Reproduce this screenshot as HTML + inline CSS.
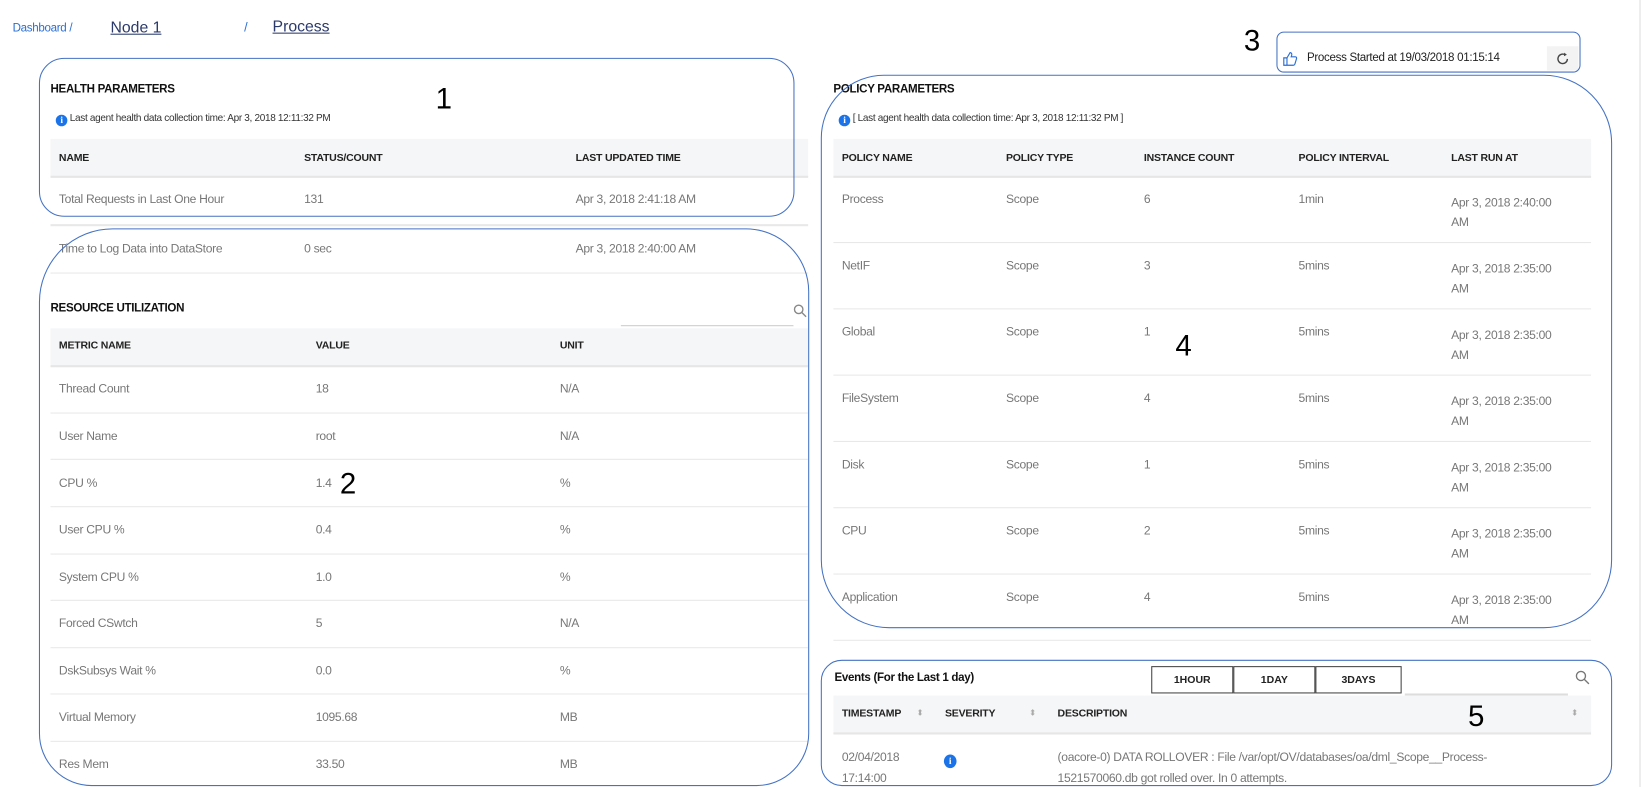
<!DOCTYPE html>
<html><head><meta charset="utf-8"><style>
html,body{margin:0;padding:0;background:#fff;width:1650px;height:787px;overflow:hidden}
#w{position:absolute;left:0;top:0;width:1568px;height:748px;overflow:hidden;transform:scale(1.0523);transform-origin:0 0;font-family:"Liberation Sans Narrow","Liberation Sans",sans-serif;color:#777}
.a{position:absolute;white-space:nowrap}
.t{font-size:11.5px;color:#777;letter-spacing:-0.3px}
.h{font-size:10px;font-weight:bold;color:#222;letter-spacing:-0.2px}
.ti{font-size:11px;font-weight:bold;color:#111;letter-spacing:-0.3px}
.hb{position:absolute;background:#f5f6f7;border-bottom:2px solid #e6e6e6}
.ln{position:absolute;height:1px;background:#e8e8e8}
.bx{position:absolute;border:1.6px solid #4472c4}
.n{position:absolute;font-family:"Liberation Sans",sans-serif;font-size:28px;color:#000}
.ic{display:inline-block;width:11px;height:11px;border-radius:50%;background:#1a73e8;color:#fff;font-size:9px;font-weight:bold;text-align:center;line-height:11px;font-family:"Liberation Serif",serif;vertical-align:-2px}
.btn{position:absolute;top:633px;height:26px;width:78px;border:1.5px solid #444;font-size:10px;font-weight:bold;color:#222;text-align:center;line-height:26px;box-sizing:border-box}
</style></head><body><div id="w">
<div class="a" style="left:12px;top:21px;font-size:11px;color:#2a6fd6;letter-spacing:-0.3px">Dashboard /</div>
<div class="a" style="left:105px;top:18px;font-size:15px;color:#2b3a6b;text-decoration:underline">Node 1</div>
<div class="a" style="left:232px;top:19px;font-size:12px;color:#2a6fd6">/</div>
<div class="a" style="left:259px;top:17px;font-size:15px;color:#2b3a6b;text-decoration:underline">Process</div>

<div class="a ti" style="left:48px;top:79px">HEALTH PARAMETERS</div>
<div class="a" style="left:53px;top:107px;font-size:9.5px;color:#333;letter-spacing:-0.3px"><span class="ic">i</span> Last agent health data collection time: Apr 3, 2018 12:11:32 PM</div>
<div class="hb" style="left:48px;top:132px;width:720px;height:35px"></div>
<div class="a h" style="left:56px;top:145px">NAME</div>
<div class="a h" style="left:289px;top:145px">STATUS/COUNT</div>
<div class="a h" style="left:547px;top:145px">LAST UPDATED TIME</div>
<div class="a t" style="left:56px;top:184px">Total Requests in Last One Hour</div>
<div class="a t" style="left:289px;top:184px">131</div>
<div class="a t" style="left:547px;top:184px">Apr 3, 2018 2:41:18 AM</div>
<div class="ln" style="left:48px;top:213px;width:720px;height:2px"></div>
<div class="a t" style="left:56px;top:231px">Time to Log Data into DataStore</div>
<div class="a t" style="left:289px;top:231px">0 sec</div>
<div class="a t" style="left:547px;top:231px">Apr 3, 2018 2:40:00 AM</div>
<div class="ln" style="left:48px;top:259px;width:720px"></div>

<div class="a ti" style="left:48px;top:287px">RESOURCE UTILIZATION</div>
<div class="ln" style="left:590px;top:309px;width:164px;background:#ccc"></div>
<svg class="a" style="left:754px;top:289px" width="13" height="13" viewBox="0 0 13 13"><circle cx="5" cy="5" r="4" fill="none" stroke="#888" stroke-width="1.3"/><path d="M8 8l4 4" stroke="#888" stroke-width="1.3"/></svg>
<div class="hb" style="left:48px;top:312px;width:720px;height:35px"></div>
<div class="a h" style="left:56px;top:323px">METRIC NAME</div>
<div class="a h" style="left:300px;top:323px">VALUE</div>
<div class="a h" style="left:532px;top:323px">UNIT</div>
<div class="a t" style="left:56px;top:364px">Thread Count</div><div class="a t" style="left:300px;top:364px">18</div><div class="a t" style="left:532px;top:364px">N/A</div>
<div class="ln" style="left:48px;top:392px;width:720px"></div>
<div class="a t" style="left:56px;top:409px">User Name</div><div class="a t" style="left:300px;top:409px">root</div><div class="a t" style="left:532px;top:409px">N/A</div>
<div class="ln" style="left:48px;top:436px;width:720px"></div>
<div class="a t" style="left:56px;top:454px">CPU %</div><div class="a t" style="left:300px;top:454px">1.4</div><div class="a t" style="left:532px;top:454px">%</div>
<div class="ln" style="left:48px;top:481px;width:720px"></div>
<div class="a t" style="left:56px;top:498px">User CPU %</div><div class="a t" style="left:300px;top:498px">0.4</div><div class="a t" style="left:532px;top:498px">%</div>
<div class="ln" style="left:48px;top:526px;width:720px"></div>
<div class="a t" style="left:56px;top:543px">System CPU %</div><div class="a t" style="left:300px;top:543px">1.0</div><div class="a t" style="left:532px;top:543px">%</div>
<div class="ln" style="left:48px;top:570px;width:720px"></div>
<div class="a t" style="left:56px;top:587px">Forced CSwtch</div><div class="a t" style="left:300px;top:587px">5</div><div class="a t" style="left:532px;top:587px">N/A</div>
<div class="ln" style="left:48px;top:615px;width:720px"></div>
<div class="a t" style="left:56px;top:632px">DskSubsys Wait %</div><div class="a t" style="left:300px;top:632px">0.0</div><div class="a t" style="left:532px;top:632px">%</div>
<div class="ln" style="left:48px;top:659px;width:720px"></div>
<div class="a t" style="left:56px;top:676px">Virtual Memory</div><div class="a t" style="left:300px;top:676px">1095.68</div><div class="a t" style="left:532px;top:676px">MB</div>
<div class="ln" style="left:48px;top:704px;width:720px"></div>
<div class="a t" style="left:56px;top:721px">Res Mem</div><div class="a t" style="left:300px;top:721px">33.50</div><div class="a t" style="left:532px;top:721px">MB</div>

<svg class="a" style="left:1219px;top:49px" width="14" height="14" viewBox="0 0 14 14"><path d="M1 6h3v7H1zM4 6l3-5c1 0 2 1 1.5 2.5L8 5h4c1 0 1.5 1 1 2l-1.5 5c-.3.7-.8 1-1.5 1H4" fill="none" stroke="#2a6fd6" stroke-width="1.1"/></svg>
<div class="a" style="left:1242px;top:49px;font-size:11px;color:#222;letter-spacing:-0.3px">Process Started at 19/03/2018 01:15:14</div>
<div class="a" style="left:1470px;top:44px;width:30px;height:23px;background:#f3f3f3"></div>
<svg class="a" style="left:1478px;top:49px" width="14" height="14" viewBox="0 0 14 14"><path d="M11.5 7A4.5 4.5 0 1 1 9.5 3.2" fill="none" stroke="#444" stroke-width="1.3"/><path d="M8.5 1l2.5 2-2.8 1.5z" fill="#444"/></svg>

<div class="a ti" style="left:792px;top:79px">POLICY PARAMETERS</div>
<div class="a" style="left:797px;top:107px;font-size:9.5px;color:#333;letter-spacing:-0.3px"><span class="ic">i</span> [ Last agent health data collection time: Apr 3, 2018 12:11:32 PM ]</div>
<div class="hb" style="left:792px;top:132px;width:720px;height:35px"></div>
<div class="a h" style="left:800px;top:145px">POLICY NAME</div>
<div class="a h" style="left:956px;top:145px">POLICY TYPE</div>
<div class="a h" style="left:1087px;top:145px">INSTANCE COUNT</div>
<div class="a h" style="left:1234px;top:145px">POLICY INTERVAL</div>
<div class="a h" style="left:1379px;top:145px">LAST RUN AT</div>
<div id="pol"></div>

<div class="a" style="left:793px;top:638px;font-size:11px;font-weight:bold;color:#111;letter-spacing:-0.3px">Events (For the Last 1 day)</div>
<div class="btn" style="left:1094px">1HOUR</div>
<div class="btn" style="left:1172px">1DAY</div>
<div class="btn" style="left:1250px;width:82px">3DAYS</div>
<div class="ln" style="left:1335px;top:659px;width:155px;height:2px;background:#ddd"></div>
<svg class="a" style="left:1497px;top:637px" width="14" height="14" viewBox="0 0 13 13"><circle cx="5" cy="5" r="4" fill="none" stroke="#777" stroke-width="1.2"/><path d="M8 8l4 4" stroke="#777" stroke-width="1.2"/></svg>
<div class="hb" style="left:792px;top:661px;width:720px;height:35px"></div>
<div class="a h" style="left:800px;top:673px">TIMESTAMP</div><div class="a" style="left:871px;top:673px;font-size:8px;color:#aaa">⬍</div>
<div class="a h" style="left:898px;top:673px">SEVERITY</div><div class="a" style="left:978px;top:673px;font-size:8px;color:#aaa">⬍</div>
<div class="a h" style="left:1005px;top:673px">DESCRIPTION</div><div class="a" style="left:1493px;top:673px;font-size:8px;color:#aaa">⬍</div>
<div class="a t" style="left:800px;top:710px;line-height:20px">02/04/2018<br>17:14:00</div>
<div class="a" style="left:897px;top:711px"><span class="ic" style="width:12px;height:13px;line-height:13px">i</span></div>
<div class="a t" style="left:1005px;top:710px;line-height:20px">(oacore-0) DATA ROLLOVER : File /var/opt/OV/databases/oa/dml_Scope__Process-<br>1521570060.db got rolled over. In 0 attempts.</div>

<div class="a" style="left:1558px;top:0;width:1px;height:748px;background:#ddd"></div>

<div class="bx" style="left:37px;top:55px;width:716px;height:149px;border-radius:24px"></div>
<div class="bx" style="left:37px;top:217px;width:730px;height:528px;border-radius:70px 60px 50px 50px"></div>
<div class="bx" style="left:1213px;top:30px;width:287px;height:37px;border-radius:7px"></div>
<div class="bx" style="left:780px;top:71px;width:750px;height:524px;border-radius:60px 65px 65px 65px"></div>
<div class="bx" style="left:780px;top:627px;width:750px;height:118px;border-radius:20px"></div>
<div class="n" style="left:414px;top:78px">1</div>
<div class="n" style="left:323px;top:444px">2</div>
<div class="n" style="left:1182px;top:23px">3</div>
<div class="n" style="left:1117px;top:313px">4</div>
<div class="n" style="left:1395px;top:665px">5</div>
</div>
<script>
var r=[["Process","6","1min","2:40:00"],["NetIF","3","5mins","2:35:00"],["Global","1","5mins","2:35:00"],["FileSystem","4","5mins","2:35:00"],["Disk","1","5mins","2:35:00"],["CPU","2","5mins","2:35:00"],["Application","4","5mins","2:35:00"]];
var h="";for(var i=0;i<r.length;i++){var y=184+i*63;
h+='<div class="a t" style="left:800px;top:'+y+'px">'+r[i][0]+'</div><div class="a t" style="left:956px;top:'+y+'px">Scope</div><div class="a t" style="left:1087px;top:'+y+'px">'+r[i][1]+'</div><div class="a t" style="left:1234px;top:'+y+'px">'+r[i][2]+'</div><div class="a t" style="left:1379px;top:'+y+'px;line-height:19px">Apr 3, 2018 '+r[i][3]+'<br>AM</div><div class="ln" style="left:792px;top:'+(y+46)+'px;width:720px"></div>';}
document.getElementById("pol").innerHTML=h;
</script>
</body></html>
